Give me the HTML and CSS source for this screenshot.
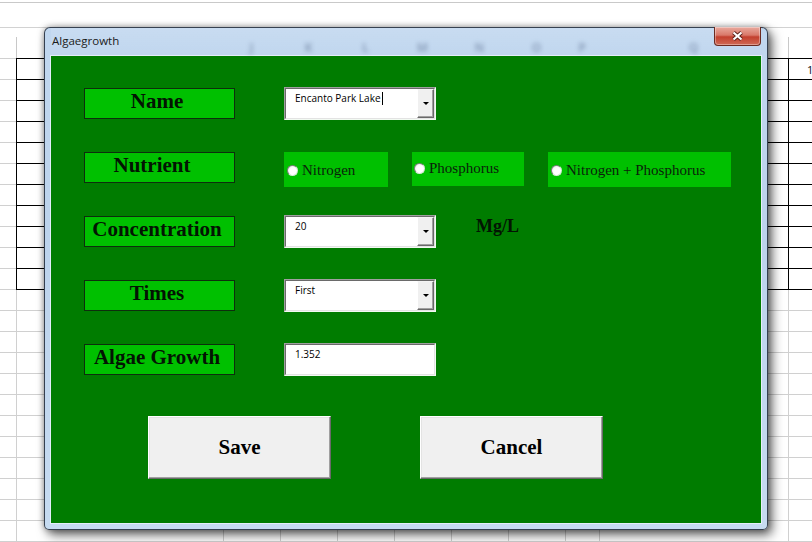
FILE: index.html
```html
<!DOCTYPE html>
<html lang="en">
<head>
<meta charset="utf-8">
<title>Algaegrowth</title>
<link rel="stylesheet" href="styles.css">
</head>
<body>
<div class="sheet">
  <div class="sheet-top"></div>
  <div class="formula"></div>
  <div class="col-heads"></div>
  <div class="grid"></div>
  <span class="cell-value">1</span>

  <div class="window">
    <div class="titlebar">
      <div class="ghost-heads">
        <span class="gh">J</span><span class="gh">K</span><span class="gh">L</span><span class="gh">M</span><span class="gh">N</span><span class="gh">O</span><span class="gh gh-narrow">P</span><span class="gh gh-wide">Q</span>
      </div>
      <span class="title">Algaegrowth</span>
      <div class="close">
        <svg width="13" height="10" viewBox="0 0 13 10">
          <path d="M2.5 1.5 L10.5 8.5 M10.5 1.5 L2.5 8.5" stroke="#5a2018" stroke-width="4" fill="none"/>
          <path d="M2.5 1.5 L10.5 8.5 M10.5 1.5 L2.5 8.5" stroke="#ffffff" stroke-width="2.2" fill="none"/>
        </svg>
      </div>
    </div>

    <div class="client">
      <div class="form">
        <div class="row">
          <div class="label">Name</div>
          <div class="combo">
            <div class="combo-inner">
              <div class="value">Encanto Park Lake<span class="caret"></span></div>
              <div class="drop"><span class="arrow"></span></div>
            </div>
          </div>
        </div>

        <div class="row">
          <div class="label label-nutrient">Nutrient</div>
          <div class="choices">
            <div class="choice c-nitrogen"><span class="radio"></span><span>Nitrogen</span></div>
            <div class="choice c-phos"><span class="radio"></span><span>Phosphorus</span></div>
            <div class="choice c-both"><span class="radio"></span><span>Nitrogen + Phosphorus</span></div>
          </div>
        </div>

        <div class="row">
          <div class="label">Concentration</div>
          <div class="combo">
            <div class="combo-inner">
              <div class="value">20</div>
              <div class="drop"><span class="arrow"></span></div>
            </div>
          </div>
          <div class="unit">Mg/L</div>
        </div>

        <div class="row">
          <div class="label">Times</div>
          <div class="combo">
            <div class="combo-inner">
              <div class="value">First</div>
              <div class="drop"><span class="arrow"></span></div>
            </div>
          </div>
        </div>

        <div class="row">
          <div class="label">Algae Growth</div>
          <div class="combo">
            <div class="combo-inner">
              <div class="value">1.352</div>
            </div>
          </div>
        </div>
      </div>

      <div class="actions">
        <button class="btn" type="button">Save</button>
        <button class="btn" type="button">Cancel</button>
      </div>
    </div>
  </div>
</div>
</body>
</html>
```

FILE: styles.css
```css
* { box-sizing: border-box; }

html, body {
  margin: 0;
  padding: 0;
}

body {
  width: 812px;
  height: 542px;
  overflow: hidden;
  background: #ffffff;
  font-family: "Open Sans", "Liberation Sans", sans-serif;
}

.sheet {
  position: relative;
  width: 812px;
  height: 542px;
  overflow: hidden;
  background: #ffffff;
}

.sheet-top {
  height: 3px;
  border-bottom: 1px solid #c9c9c9;
}

.formula {
  height: 25px;
  border-bottom: 1px solid #d2d2d2;
}

.col-heads {
  height: 30px;
  background: linear-gradient(to right,
      transparent 16px, #c8c8c8 16px 17px,
      transparent 17px 788px, #c8c8c8 788px 789px,
      transparent 789px) 0 9px / 100% 21px no-repeat;
}

.grid {
  height: 484px;
  background:
    linear-gradient(to right,
      transparent 16px, #000 16px 17px,
      transparent 17px 788px, #000 788px 789px,
      transparent 789px) 0 0 / 100% 232px no-repeat,
    repeating-linear-gradient(to bottom, #000 0 1px, transparent 1px 21px) 16px 0 / 796px 232px no-repeat,
    linear-gradient(to right,
      transparent 16px, #d0d0d0 16px 17px,
      transparent 17px 223px, #d0d0d0 223px 224px,
      transparent 224px 280px, #d0d0d0 280px 281px,
      transparent 281px 337px, #d0d0d0 337px 338px,
      transparent 338px 394px, #d0d0d0 394px 395px,
      transparent 395px 451px, #d0d0d0 451px 452px,
      transparent 452px 508px, #d0d0d0 508px 509px,
      transparent 509px 565px, #d0d0d0 565px 566px,
      transparent 566px 599px, #d0d0d0 599px 600px,
      transparent 600px 788px, #d0d0d0 788px 789px,
      transparent 789px),
    repeating-linear-gradient(to bottom, #d0d0d0 0 1px, transparent 1px 21px);
}

.cell-value {
  position: absolute;
  left: 807px;
  top: 62px;
  font-size: 11px;
  color: #111;
}

/* ---------- Window ---------- */
.window {
  position: absolute;
  left: 44px;
  top: 27px;
  width: 724px;
  height: 503px;
  display: flex;
  flex-direction: column;
  padding: 0 6px 6px;
  border: 1px solid rgba(28, 38, 52, 0.85);
  border-radius: 6px 6px 5px 5px;
  background: linear-gradient(to bottom, #c1d7ef 0%, #bcd3ec 40%, #c6dbf1 100%);
  box-shadow: 4px 5px 11px rgba(0, 0, 0, 0.6), 0 0 6px rgba(0, 0, 0, 0.35);
}

.titlebar {
  position: relative;
  flex: none;
  height: 28px;
  padding: 5px 0 0 1px;
  font-size: 11.5px;
  line-height: 15px;
  color: #1b1b1b;
  background: linear-gradient(to bottom, rgba(255, 255, 255, 0.12), rgba(255, 255, 255, 0));
}

.title {
  position: relative;
}

.ghost-heads {
  position: absolute;
  left: 172px;
  top: 12px;
  display: flex;
  filter: blur(2.2px);
  color: rgba(60, 80, 112, 0.38);
  font-weight: bold;
  font-size: 12px;
}

.gh {
  width: 57px;
  text-align: center;
}

.gh-narrow { width: 34px; }
.gh-wide { width: 189px; }

.close {
  position: absolute;
  top: -1px;
  right: 0;
  width: 47px;
  height: 19px;
  display: flex;
  align-items: center;
  justify-content: center;
  border: 1px solid #6b2a20;
  border-top: none;
  border-radius: 0 0 4px 4px;
  background: linear-gradient(to bottom, #e9aa9e 0%, #d9796a 45%, #c3402e 55%, #cf6a55 100%);
  box-shadow: inset 0 0 0 1px rgba(255, 255, 255, 0.35);
}

/* ---------- Client area ---------- */
.client {
  flex: 1;
  background: #007c00;
  padding: 31px 0 0 33px;
  box-shadow: 0 0 0 1px #e4eef9;
}

.form {
  display: flex;
  flex-direction: column;
  gap: 31px;
}

.row {
  display: flex;
  align-items: flex-start;
  height: 33px;
}

.label {
  flex: none;
  width: 151px;
  height: 31px;
  margin-top: 1px;
  padding-right: 5px;
  border: 1px solid #0d2e0d;
  background: #00c000;
  color: #031403;
  font: bold 21px/24px "Liberation Serif", serif;
  text-align: center;
  white-space: nowrap;
}

.label-nutrient { padding-right: 15px; }

.combo {
  flex: none;
  width: 152px;
  height: 33px;
  margin-left: 49px;
  border: 1px solid;
  border-color: #a0a0a0 #f2faf2 #f2faf2 #a0a0a0;
  background: #fff;
}

.combo-inner {
  display: flex;
  height: 100%;
  border: 1px solid;
  border-color: #6a6a6a #e3e3e3 #e3e3e3 #6a6a6a;
}

.value {
  flex: 1;
  padding: 3px 0 0 9px;
  font-family: "Open Sans", "Liberation Sans", sans-serif;
  font-size: 10px;
  line-height: 13px;
  color: #000;
  white-space: nowrap;
}

.caret {
  display: inline-block;
  width: 1px;
  height: 13px;
  margin-left: 1px;
  vertical-align: top;
  background: #000;
}

.drop {
  flex: none;
  width: 17px;
  display: flex;
  align-items: center;
  justify-content: center;
  border: 1px solid;
  border-color: #f4f4f4 #696969 #696969 #ffffff;
  background: #f0f0f0;
  box-shadow: inset -1px -1px 0 #a0a0a0;
}

.arrow {
  width: 0;
  height: 0;
  border-left: 3px solid transparent;
  border-right: 3px solid transparent;
  border-top: 3px solid #000;
}

.choices {
  display: flex;
  gap: 24px;
  margin-left: 49px;
  margin-top: 1px;
}

.choice {
  height: 35px;
  display: flex;
  align-items: center;
  gap: 4px;
  padding-left: 3px;
  padding-top: 1px;
  background: #00c000;
  color: #0a1e0a;
  font: 15px/17px "Liberation Serif", serif;
  white-space: nowrap;
}

.c-nitrogen { width: 104px; }
.c-phos { width: 112px; height: 34px; padding-left: 2px; padding-top: 0; padding-bottom: 2px; }
.c-both { width: 183px; }

.radio {
  flex: none;
  width: 11px;
  height: 11px;
  border-radius: 50%;
  background: radial-gradient(circle at 60% 60%, #ffffff 0 45%, #f2f2f2 70%, #cfcfcf 100%);
  border: 1px solid;
  border-color: #7e7e7e #d8e8d8 #d8e8d8 #7e7e7e;
}

.unit {
  margin-left: 40px;
  margin-top: 1px;
  font: bold 18px/20px "Liberation Serif", serif;
  color: #031403;
}

.actions {
  display: flex;
  gap: 89px;
  margin-top: 40px;
  padding-left: 64px;
}

.btn {
  width: 183px;
  height: 63px;
  padding: 0;
  display: flex;
  align-items: center;
  justify-content: center;
  background: #f0f0f0;
  border: 1px solid;
  border-color: #ffffff #696969 #696969 #ffffff;
  box-shadow: inset -1px -1px 0 #a0a0a0, inset 1px 1px 0 #e3e3e3;
  color: #000;
  font: bold 21px "Liberation Serif", serif;
}
```
